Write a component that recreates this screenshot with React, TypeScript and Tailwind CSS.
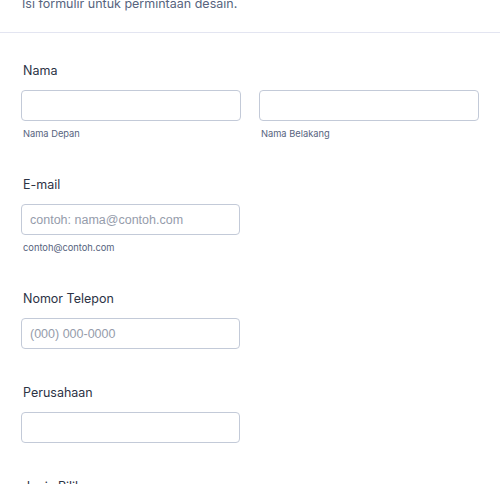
const inter = "font-['Inter','Noto_Sans',sans-serif]"

type FieldProps = {
  label: string
  sub?: string
  children: React.ReactNode
}

const Field = ({ label, sub, children }: FieldProps) => {
  return (
    <div className={sub ? 'mb-[37px]' : 'mb-[36px]'}>
      <label className="block pl-[2px] text-[12.5px] leading-[16px] text-[#2c3345]">
        {label}
      </label>
      <div className="mt-[11px]">{children}</div>
      {sub && (
        <div className="mt-[6px] pl-[2px] text-[9.3px] leading-[13px] text-[#57647e]">{sub}</div>
      )}
    </div>
  )
}

const Input = ({ placeholder, wide }: { placeholder?: string; wide?: boolean }) => {
  return (
    <input
      placeholder={placeholder}
      className={`${wide ? 'w-[220px]' : 'w-[219px]'} block h-[31px] rounded-[4px] border border-[#c3cad8] bg-white px-[8px] font-['Liberation_Sans',Arial,sans-serif] text-[12.5px] text-[#2c3345] outline-none placeholder:text-[#959cab]`}
    />
  )
}

const NameInput = ({ sub }: { sub: string }) => {
  return (
    <div className="flex flex-col">
      <Input wide />
      <div className="mt-[6px] pl-[2px] text-[9.3px] leading-[13px] text-[#57647e]">{sub}</div>
    </div>
  )
}

export default function App() {
  return (
    <div className={`${inter} h-[484px] w-[500px] overflow-hidden bg-white`}>
      <div className="border-b border-[#e3e5f1] px-[22px] pb-[19px]">
        <p className="-mt-[5px] text-[12.5px] leading-[18px] text-[#57647e]">
          Isi formulir untuk permintaan desain.
        </p>
      </div>

      <div className="px-[21px] pt-[30px]">
        <div className="mb-[37px]">
          <label className="block pl-[2px] text-[12.5px] leading-[16px] text-[#2c3345]">
            Nama
          </label>
          <div className="mt-[11px] flex gap-[18px]">
            <NameInput sub="Nama Depan" />
            <NameInput sub="Nama Belakang" />
          </div>
        </div>

        <Field label="E-mail" sub="contoh@contoh.com">
          <Input placeholder="contoh: nama@contoh.com" />
        </Field>

        <Field label="Nomor Telepon">
          <Input placeholder="(000) 000-0000" />
        </Field>

        <Field label="Perusahaan">
          <Input />
        </Field>

        <Field label="Jenis Pilihan">
          <Input />
        </Field>
      </div>
    </div>
  )
}
